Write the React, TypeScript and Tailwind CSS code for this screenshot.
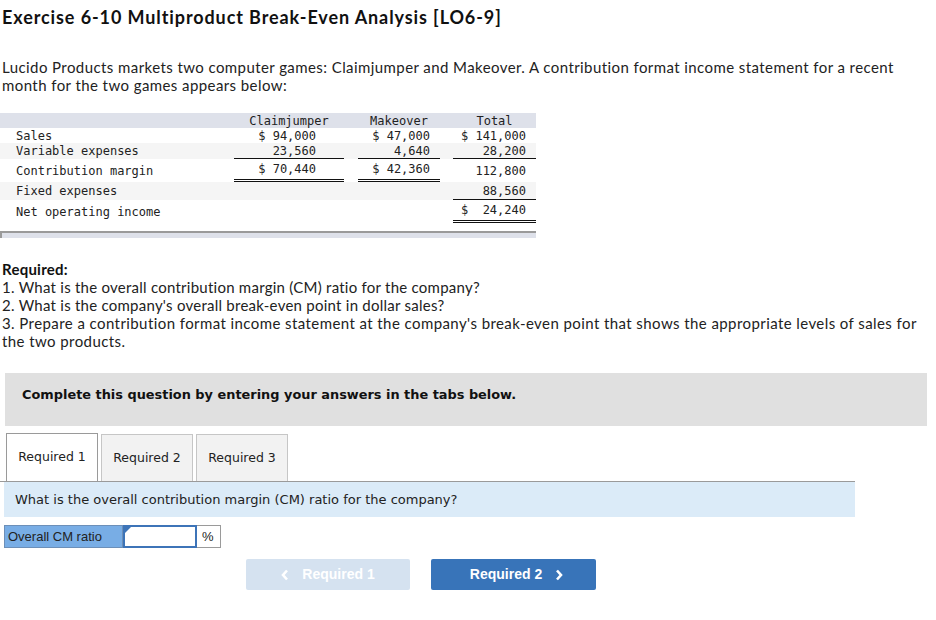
export default function App() {
  const mono = "font-['DejaVu_Sans_Mono',monospace] text-[12px] text-[#222]";
  const cell = "flex items-center justify-end h-full";
  return (
    <div className="w-[936px] h-[620px] bg-white relative overflow-hidden">
      <div className="px-[2px] pt-[6px] font-['Lato',sans-serif] text-[#222]">
        <h1 className="text-[18px] leading-[22px] font-bold tracking-[0.9px] text-[#111]">
          Exercise 6-10 Multiproduct Break-Even Analysis [LO6-9]
        </h1>
        <p className="mt-[30px] text-[15px] leading-[18px] tracking-[0.42px] w-[908px]">
          Lucido Products markets two computer games: Claimjumper and Makeover. A contribution format income statement for a recent month for the two games appears below:
        </p>
      </div>

      <div className={`mt-[19px] w-[536px] ${mono}`}>
        <div className="flex h-[15px] bg-[#dee1ea] items-center">
          <div className="w-[234px]" />
          <div className="w-[110px] text-center">Claimjumper</div>
          <div className="w-[14px]" />
          <div className="w-[82px] text-center">Makeover</div>
          <div className="w-[13px]" />
          <div className="w-[83px] text-center">Total</div>
        </div>
        <div className="flex h-[15px] items-center whitespace-pre pt-[1px]">
          <div className="w-[234px] pl-[16px]">Sales</div>
          <div className={`w-[110px] pr-[28px] ${cell}`}>$ 94,000</div>
          <div className="w-[14px]" />
          <div className={`w-[82px] pr-[10px] ${cell}`}>$ 47,000</div>
          <div className="w-[13px]" />
          <div className={`w-[83px] pr-[10px] ${cell}`}>$ 141,000</div>
        </div>
        <div className="flex h-[16px] items-center bg-[#f5f5f5] whitespace-pre">
          <div className="w-[234px] pl-[16px]">Variable expenses</div>
          <div className={`w-[110px] pr-[28px] border-b border-[#111] ${cell}`}>23,560</div>
          <div className="w-[14px]" />
          <div className={`w-[82px] pr-[10px] border-b border-[#111] ${cell}`}>4,640</div>
          <div className="w-[13px]" />
          <div className={`w-[83px] pr-[10px] border-b border-[#111] ${cell}`}>28,200</div>
        </div>
        <div className="flex h-[23px] items-center whitespace-pre">
          <div className="w-[234px] pl-[16px]">Contribution margin</div>
          <div className={`w-[110px] pr-[28px] border-b-[3px] border-double border-[#111] ${cell}`}>$ 70,440</div>
          <div className="w-[14px]" />
          <div className={`w-[82px] pr-[10px] border-b-[3px] border-double border-[#111] ${cell}`}>$ 42,360</div>
          <div className="w-[13px]" />
          <div className={`w-[83px] pr-[10px] ${cell}`}>112,800</div>
        </div>
        <div className="flex h-[18px] items-center bg-[#f5f5f5] whitespace-pre">
          <div className="w-[234px] pl-[16px]">Fixed expenses</div>
          <div className="w-[110px]" />
          <div className="w-[14px]" />
          <div className="w-[82px]" />
          <div className="w-[13px]" />
          <div className={`w-[83px] pr-[10px] border-b border-[#111] ${cell}`}>88,560</div>
        </div>
        <div className="flex h-[23px] items-center whitespace-pre">
          <div className="w-[234px] pl-[16px]">Net operating income</div>
          <div className="w-[110px]" />
          <div className="w-[14px]" />
          <div className="w-[82px]" />
          <div className="w-[13px]" />
          <div className={`w-[83px] pr-[10px] border-b-[3px] border-double border-[#111] ${cell}`}>$  24,240</div>
        </div>
        <div className="mt-[8px] h-[7px] bg-[#dee1ea] border-t-2 border-l-2 border-[#9a9a9a]" />
      </div>

      <div className="px-[2px] mt-[22px] font-['Lato',sans-serif] text-[15px] leading-[18px] tracking-[0.25px] text-[#222]">
        <div className="font-bold text-[#111]">Required:</div>
        <div>1. What is the overall contribution margin (CM) ratio for the company?</div>
        <div>2. What is the company's overall break-even point in dollar sales?</div>
        <div className="w-[925px] tracking-[0.42px]">3. Prepare a contribution format income statement at the company's break-even point that shows the appropriate levels of sales for the two products.</div>
      </div>

      <div className="ml-[5px] mt-[23px] w-[922px] h-[53px] bg-[#e0e0e0] pl-[17px] pt-[14px] font-['DejaVu_Sans',Verdana,sans-serif] font-bold text-[12.9px] leading-[16px] text-[#111]">
        Complete this question by entering your answers in the tabs below.
      </div>

      <div className="mt-[8px] font-['DejaVu_Sans',Verdana,sans-serif] text-[12.5px] text-[#222]">
        <div className="flex items-end pl-[6px] gap-[3px] w-[855px] border-b border-[#9a9a9a] h-[48px]">
          <div className="w-[92px] h-[48px] bg-white border border-b-0 border-[#9a9a9a] flex items-center justify-center">Required 1</div>
          <div className="w-[92px] h-[47px] bg-[#f2f2f2] border border-b-0 border-[#c6c6c6] flex items-center justify-center">Required 2</div>
          <div className="w-[92px] h-[47px] bg-[#f2f2f2] border border-b-0 border-[#c6c6c6] flex items-center justify-center">Required 3</div>
        </div>
        <div className="ml-[4px] w-[851px] h-[35px] bg-[#dbebf8] flex items-center pl-[11px] text-[13px] text-[#222]">
          What is the overall contribution margin (CM) ratio for the company?
        </div>
      </div>

      <div className="mt-[8px] ml-[4px] flex h-[23px] font-['Liberation_Sans',Arial,sans-serif] text-[13px] text-[#222]">
        <div className="w-[119px] h-full bg-[#78ade5] border border-[#6c8fb8] flex items-center pl-[3px]">Overall CM ratio</div>
        <div className="relative w-[74px] h-full bg-white border-2 border-[#3d74b8]">
          <div className="absolute left-0 top-0 w-0 h-0 border-t-[6px] border-t-[#3d74b8] border-r-[6px] border-r-transparent" />
        </div>
        <div className="w-[24px] h-full bg-white border border-[#9a9a9a] border-l-0 flex items-center pl-[5px]">%</div>
      </div>

      <div className="mt-[11px] ml-[246px] flex gap-[21px] font-['Liberation_Sans',Arial,sans-serif] font-bold text-[14px] text-white">
        <div className="w-[164px] h-[31px] rounded-[2px] bg-[#d5e2f0] flex items-center justify-center gap-[13px]">
          <svg width="8" height="12" viewBox="0 0 8 12" fill="none"><path d="M6 1.5L2 6l4 4.5" stroke="white" strokeWidth="2.6" /></svg>
          <span>Required 1</span>
        </div>
        <div className="w-[165px] h-[31px] rounded-[2px] bg-[#3874b9] flex items-center justify-center gap-[13px] pl-[6px]">
          <span>Required 2</span>
          <svg width="8" height="12" viewBox="0 0 8 12" fill="none"><path d="M2 1.5L6 6l-4 4.5" stroke="white" strokeWidth="2.6" /></svg>
        </div>
      </div>
    </div>
  );
}
